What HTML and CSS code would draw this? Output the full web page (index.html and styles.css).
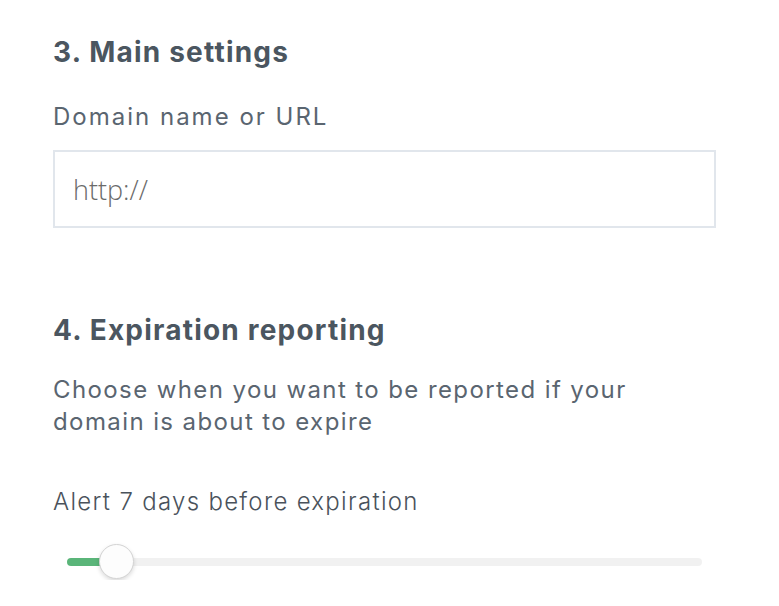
FILE: index.html
```html
<!DOCTYPE html>
<html lang="en">
<head>
  <meta charset="UTF-8">
  <meta name="viewport" content="width=device-width, initial-scale=1.0">
  <title>Domain expiration monitor</title>
  <link rel="stylesheet" href="styles.css">
</head>
<body>

<div class="form">
  <!-- Main settings -->
  <div class="step">
    <h2>3. Main settings</h2>
    <label for="domain">Domain name or URL</label>
    <input type="text" id="domain" name="domain" placeholder="http://">
  </div>

  <!-- Expiration reporting -->
  <div class="step">
    <h2>4. Expiration reporting</h2>
    <p class="hint">Choose when you want to be reported if your domain is about to expire</p>
    <label for="days" class="light">Alert <span id="daysValue">7</span> days before expiration</label>
    <input type="range" id="days" class="slider" min="1" max="115" value="7" style="--fill: 5.3%">
  </div>
</div>

</body>
</html>
```

FILE: styles.css
```css
body {
  font-family: Inter, "Open Sans", sans-serif;
  margin: 0;
  padding: 0;
  background-color: #fff;
  color: #5a6570;
}

.form {
  width: 663px;
  padding: 35px 0 0 53px;
}

/* Steps */
.step h2 {
  font-size: 28px;
  font-weight: 700;
  letter-spacing: 1.2px;
  color: #4b5660;
  margin: 0 0 33px 0;
  line-height: 34px;
}

.step label {
  display: block;
  font-size: 24px;
  line-height: 30px;
  letter-spacing: 2px;
  margin-bottom: 18px;
}

.step + .step {
  margin-top: 85px;
}

.step h2 + .hint {
  margin-top: -6px;
}

.step .hint {
  font-size: 24px;
  line-height: 32px;
  letter-spacing: 1.4px;
  width: 600px;
  margin: 0 0 49px 0;
}

.step label.light {
  font-weight: 300;
  letter-spacing: 1.3px;
  color: #4a525b;
  margin-bottom: 27px;
}

/* Text input */
.step input[type="text"] {
  display: block;
  width: 100%;
  height: 78px;
  box-sizing: border-box;
  border: 2px solid #e1e6ec;
  padding: 0 18px;
  font-family: "Open Sans", sans-serif;
  font-size: 27px;
  font-weight: 300;
  color: #333;
  outline: none;
}

.step input::placeholder {
  color: #6a6a6a;
}

/* Range slider */
.slider {
  -webkit-appearance: none;
  appearance: none;
  display: block;
  width: 635px;
  height: 36px;
  margin: 0 0 0 14px;
  background: transparent;
}

.slider::-webkit-slider-runnable-track {
  height: 8px;
  border-radius: 4px;
  background: linear-gradient(to right, #5ab579 0, #5ab579 var(--fill), #f1f1f1 var(--fill));
}

.slider::-webkit-slider-thumb {
  -webkit-appearance: none;
  width: 35px;
  height: 35px;
  margin-top: -14px;
  border-radius: 50%;
  border: 1px solid #d4d4d4;
  background: #fdfdfd;
  box-shadow: 0 2px 4px rgba(0, 0, 0, 0.15);
  cursor: pointer;
}
```
